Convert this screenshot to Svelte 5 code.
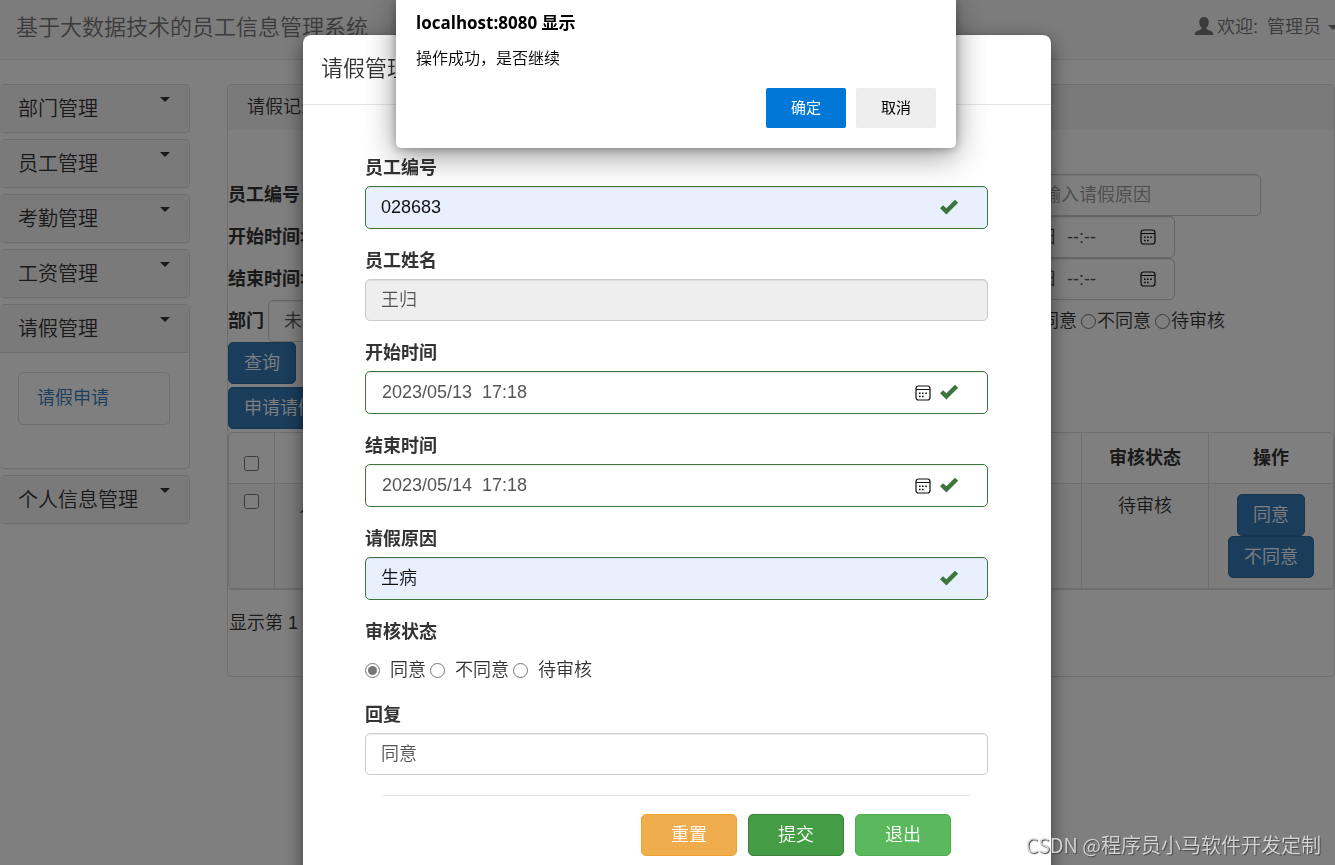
<script>
  const menus = [
    { name: '部门管理' },
    { name: '员工管理' },
    { name: '考勤管理' },
    { name: '工资管理' },
    { name: '请假管理', open: true, children: ['请假申请'] },
    { name: '个人信息管理' }
  ];

  const states = ['同意', '不同意', '待审核'];

  const fields = [
    { id: 'empNo', label: '员工编号', value: '028683', kind: 'filled', valid: true },
    { id: 'empName', label: '员工姓名', value: '王归', kind: 'readonly' },
    { id: 'startTime', label: '开始时间', value: '2023/05/13  17:18', kind: 'date', valid: true },
    { id: 'endTime', label: '结束时间', value: '2023/05/14  17:18', kind: 'date', valid: true },
    { id: 'reason', label: '请假原因', value: '生病', kind: 'filled', valid: true }
  ];

  let checked = '同意';
  let reply = '同意';
</script>

{#snippet calendar()}
  <svg class="calendar" viewBox="0 0 16 16" width="16" height="16" aria-hidden="true">
    <rect x="1" y="1" width="14" height="14" rx="2.5" fill="none" stroke="#111" stroke-width="1.2" />
    <path d="M1 4.5h14" stroke="#111" stroke-width="1" />
    <path d="M4 7.500h1.600v1.600h-1.600zM7 7.500h1.600v1.600h-1.600zM10.300 7.500h1.600v1.600h-1.600zM4 10.700h1.600v1.600h-1.600zM7 10.700h1.600v1.600h-1.600z" fill="#111" />
  </svg>
{/snippet}

<div class="page">
  <nav class="navbar">
    <a class="brand" href="#home">基于大数据技术的员工信息管理系统</a>
    <a class="user" href="#user">
      <svg viewBox="0 0 20 20" width="20" height="20" aria-hidden="true">
        <path fill="currentColor" d="M10 0C7 0 5.200 2 5.200 5c0 2.300.900 4.300 2.300 5.400.300 1.300-.300 2-1.700 2.600L2 14.500C1.200 15 .800 15.800.800 17v1h18.400v-1c0-1.200-.400-2-1.200-2.500L14.200 13c-1.400-.600-2-1.300-1.700-2.600 1.400-1.100 2.300-3.100 2.300-5.400 0-3-1.800-5-4.800-5z" />
      </svg>
      <span>欢迎:</span>
      <span class="user-name">管理员</span>
      <i class="caret"></i>
    </a>
  </nav>

  <div class="layout">
    <aside class="sidebar">
      {#each menus as menu}
        <div class="menu">
          <button class="menu-heading" class:open={menu.open}>
            {menu.name}
            <i class="caret"></i>
          </button>
          {#if menu.open}
            <div class="menu-body">
              {#each menu.children as child}
                <a class="menu-item" href="#leave">{child}</a>
              {/each}
            </div>
          {/if}
        </div>
      {/each}
    </aside>

    <main class="panel">
      <div class="panel-heading">请假记录</div>
      <div class="panel-body">
        <form class="search">
          <div class="search-row">
            <label for="q-reason">员工编号</label>
            <div class="search-end end-reason">
              <input id="q-reason" class="control" placeholder="请输入请假原因" />
            </div>
          </div>
          <div class="search-row">
            <label for="q-start">开始时间&gt;=</label>
            <div class="search-end end-date">
              <div class="control date-box"><input id="q-start" value="年/月/日  --:--" />{@render calendar()}</div>
            </div>
          </div>
          <div class="search-row">
            <label for="q-end">结束时间&gt;=</label>
            <div class="search-end end-date">
              <div class="control date-box"><input id="q-end" value="年/月/日  --:--" />{@render calendar()}</div>
            </div>
          </div>
          <div class="search-row">
            <label for="q-dept">部门</label>
            <select id="q-dept" class="control">
              <option>未选择</option>
            </select>
            <div class="search-end end-state">
              {#each states as state}
                <label class="state"><input type="radio" name="q-state" />{state}</label>
              {/each}
            </div>
          </div>
          <button type="button" class="btn primary">查询</button>
        </form>
        <button class="btn primary apply">申请请假</button>

        <table>
          <thead>
            <tr>
              <th class="col-check"><input type="checkbox" aria-label="全选" /></th>
              <th class="col-dept">部门</th>
              <th></th>
              <th class="col-state">审核状态</th>
              <th class="col-action">操作</th>
            </tr>
          </thead>
          <tbody>
            <tr>
              <td><input type="checkbox" aria-label="选择" /></td>
              <td>人事部</td>
              <td></td>
              <td>待审核</td>
              <td class="actions">
                <button class="btn primary">同意</button>
                <button class="btn primary">不同意</button>
              </td>
            </tr>
          </tbody>
        </table>
        <p class="summary">显示第 1 到第 1 条记录，总共 1 条记录</p>
      </div>
    </main>
  </div>
</div>

<div class="backdrop">
  <div class="modal" role="dialog" aria-labelledby="modal-title">
    <h4 id="modal-title" class="modal-title">请假管理</h4>
    <form class="modal-body">
      {#each fields as field}
        <div class="group">
          <label class="name" for={field.id}>{field.label}</label>
          <div class="control {field.kind}" class:valid={field.valid}>
            <input id={field.id} value={field.value} readonly={field.kind === 'readonly'} />
            {#if field.kind === 'date'}
              {@render calendar()}
            {/if}
            {#if field.valid}
              <svg class="check" viewBox="0 0 20 16" width="20" height="16" aria-hidden="true">
                <path fill="#3c763d" d="M1 9.300 4 6.300 7.400 9.300 15.900.700 19.200 3.800 7.400 15.500z" />
              </svg>
            {/if}
          </div>
        </div>
      {/each}
      <div class="group" role="radiogroup" aria-labelledby="state-name">
        <div class="name" id="state-name">审核状态</div>
        <div class="radios">
          {#each states as state}
            <label><input type="radio" name="state" value={state} bind:group={checked} />{state}</label>
          {/each}
        </div>
      </div>
      <div class="group">
        <label class="name" for="reply">回复</label>
        <div class="control"><input id="reply" bind:value={reply} /></div>
      </div>
      <div class="buttons">
        <button type="button" class="btn warning">重置</button>
        <button type="button" class="btn submit">提交</button>
        <button type="button" class="btn success">退出</button>
      </div>
    </form>
  </div>
</div>

<div class="alert-layer">
  <div class="alert" role="alertdialog" aria-labelledby="alert-title">
    <h5 id="alert-title">localhost:8080 显示</h5>
    <p>操作成功，是否继续</p>
    <div class="alert-buttons">
      <button class="ok">确定</button>
      <button>取消</button>
    </div>
  </div>
</div>

<div class="watermark">CSDN @程序员小马软件开发定制</div>

<style>
  :global(body) {
    overflow: hidden;
    background: #fff;
    font: 350 18px/25px "Liberation Sans", "Noto Sans CJK SC", sans-serif;
    color: #333;
  }
  :global(*) {
    box-sizing: border-box;
  }
  input, button, select {
    font: inherit;
    color: inherit;
  }
  a {
    text-decoration: none;
  }
  label, th, .name {
    font-weight: bold;
  }
  .caret {
    border: 5px solid transparent;
    border-top-color: currentColor;
    border-bottom: 0;
  }
  input[type='radio'], input[type='checkbox'] {
    width: 15px;
    height: 15px;
    margin: 0;
    accent-color: #767676;
  }

  .navbar {
    display: flex;
    align-items: center;
    justify-content: space-between;
    height: 60px;
    margin-bottom: 24px;
    padding: 0 0 4px 16px;
    background: #f8f8f8;
    border-bottom: 1px solid #e7e7e7;
  }
  .brand {
    font-size: 22px;
    color: #777;
  }
  .user {
    display: flex;
    align-items: center;
    gap: 3px;
    margin-right: -3px;
    color: #777;
  }
  .user svg {
    margin-bottom: 2px;
  }
  .user-name {
    margin: 0 4px 0 6px;
  }

  .layout {
    display: flex;
    gap: 37px;
  }
  .sidebar {
    flex: 0 0 190px;
  }
  .menu {
    margin-bottom: 6px;
    background: #fff;
    border: 1px solid #ddd;
    border-left: 0;
    border-radius: 5px;
    box-shadow: 0 1px 1px rgba(0, 0, 0, 0.05);
  }
  .menu-heading {
    display: flex;
    justify-content: space-between;
    width: 100%;
    padding: 12px 19px 10px 18px;
    background: #f5f5f5;
    border: 0;
    border-radius: 5px;
    font-size: 20px;
  }
  .menu-heading.open {
    border-bottom: 1px solid #ddd;
    border-radius: 5px 5px 0 0;
  }
  .menu-body {
    padding: 19px 19px 18px 18px;
  }
  .menu-item {
    display: block;
    margin-bottom: 25px;
    padding: 13px 18px;
    border: 1px solid #ddd;
    border-radius: 5px;
    color: #337ab7;
  }

  .panel {
    flex: 1;
    min-width: 0;
    border: 1px solid #ddd;
    border-radius: 5px;
    box-shadow: 0 1px 1px rgba(0, 0, 0, 0.05);
  }
  .panel-heading {
    padding: 10px 19px;
    background: #f5f5f5;
    border-radius: 5px 5px 0 0;
  }
  .panel-body {
    padding-top: 44px;
  }
  .search-row {
    display: flex;
    align-items: center;
    gap: 4px;
  }
  .search-end {
    display: flex;
    gap: 4px;
    margin-left: auto;
  }
  .end-reason {
    margin-right: 73px;
  }
  .end-date {
    margin-right: 159px;
  }
  .end-state {
    margin-right: 109px;
  }
  .end-reason .control {
    width: 252px;
  }
  .state {
    display: flex;
    align-items: center;
    gap: 1px;
    font-weight: inherit;
  }
  .control {
    display: flex;
    align-items: center;
    height: 42px;
    padding: 0 15px;
    background: #fff;
    border: 1px solid #ccc;
    border-radius: 5px;
    box-shadow: inset 0 1px 1px rgba(0, 0, 0, 0.075);
    color: #555;
  }
  .control input {
    flex: 1;
    min-width: 0;
    padding: 0;
    background: none;
    border: 0;
    outline: 0;
  }
  .control::placeholder {
    color: #999;
  }
  .date-box {
    width: 198px;
    padding-right: 18px;
  }
  select.control {
    width: 110px;
    appearance: none;
  }
  .btn {
    height: 42px;
    padding: 0 15px;
    border: 1px solid transparent;
    border-radius: 5px;
    color: #fff;
  }
  .primary {
    display: block;
    background: #337ab7;
    border-color: #2e6da4;
  }
  .apply {
    margin: 3px 0;
  }
  table {
    width: 100%;
    table-layout: fixed;
    border: 1px solid #ddd;
    border-radius: 5px;
    border-spacing: 0;
    text-align: center;
  }
  th, td {
    padding: 10px;
    border-right: 1px solid #ddd;
    border-bottom: 1px solid #ddd;
    vertical-align: top;
  }
  th {
    padding: 13px 10px 12px;
  }
  th:last-child, td:last-child {
    border-right: 0;
  }
  tbody tr {
    background: #f9f9f9;
  }
  table input[type='checkbox'] {
    display: block;
    margin: 0 auto;
  }
  .col-check {
    width: 46px;
    padding-top: 23px;
  }
  .col-dept {
    width: 103px;
  }
  .col-state {
    width: 127px;
  }
  .col-action {
    width: 124px;
  }
  .actions .btn {
    margin: 0 auto;
  }
  .summary {
    margin: 21px 1px 40px;
  }

  .backdrop {
    position: fixed;
    inset: 0;
    padding: 35px 0 0 19px;
    background: rgba(0, 0, 0, 0.5);
  }
  .modal {
    max-width: 748px;
    min-height: 100vh;
    margin: 0 auto;
    background: #fff;
    border-radius: 8px;
    box-shadow: 0 6px 19px rgba(0, 0, 0, 0.5), 0 0 1px rgba(0, 0, 0, 0.6);
  }
  .modal-title {
    margin: 0;
    padding: 21px 18px 23px;
    border-bottom: 1px solid #e5e5e5;
    font-size: 22px;
    font-weight: inherit;
  }
  .modal-body {
    padding: 51px 63px 0 62px;
  }
  .group {
    margin-bottom: 20px;
  }
  .name {
    display: block;
    margin-bottom: 5px;
  }
  .valid {
    height: 43px;
    padding-right: 28px;
    border-color: #3c763d;
  }
  .readonly {
    background: #eee;
  }
  .date {
    padding-left: 16px;
  }
  .filled {
    background: #e8f0fe;
    color: #111;
  }
  .check {
    margin: 0 0 2px 8px;
  }
  .radios {
    display: flex;
    gap: 4px;
    padding-top: 8px;
  }
  .radios label, .state {
    font-weight: 350;
  }
  .radios label {
    display: flex;
    align-items: center;
    gap: 10px;
  }
  .buttons {
    display: flex;
    justify-content: flex-end;
    gap: 11px;
    margin: 0 18px;
    padding: 18px 19px 0 0;
    border-top: 1px solid #e5e5e5;
  }
  .buttons .btn {
    width: 96px;
  }
  .warning {
    background: #f0ad4e;
    border-color: #eea236;
  }
  .submit {
    background: #449d44;
    border-color: #398439;
  }
  .success {
    background: #5cb85c;
    border-color: #4cae4c;
  }

  .alert-layer {
    position: fixed;
    inset: 0 0 auto 0;
    padding-left: 17px;
  }
  .alert {
    max-width: 560px;
    margin: 0 auto;
    padding: 10px 20px 20px;
    background: #fff;
    border-radius: 0 0 5px 5px;
    box-shadow: 0 8px 32px rgba(0, 0, 0, 0.4), 0 1px 8px rgba(0, 0, 0, 0.3);
    color: #000;
    font-family: "Open Sans", "Noto Sans CJK SC", sans-serif;
    font-size: 16px;
    font-weight: 400;
  }
  .alert h5 {
    margin: 0 0 11px;
    font-size: 17px;
  }
  .alert p {
    margin: 0 0 17px;
    font-weight: 350;
  }
  .alert-buttons {
    display: flex;
    justify-content: flex-end;
    gap: 10px;
  }
  .alert button {
    width: 80px;
    height: 40px;
    padding-bottom: 3px;
    background: #eee;
    border: 0;
    border-radius: 2px;
    font-size: 15px;
  }
  .alert .ok {
    background: #0078d7;
    color: #fff;
  }

  .watermark {
    position: fixed;
    right: 14px;
    bottom: 8px;
    color: rgba(225, 225, 225, 0.9);
    font-family: "Noto Sans CJK SC", sans-serif;
    font-size: 20px;
    text-shadow: 1px 1px 1px #444;
  }
</style>
